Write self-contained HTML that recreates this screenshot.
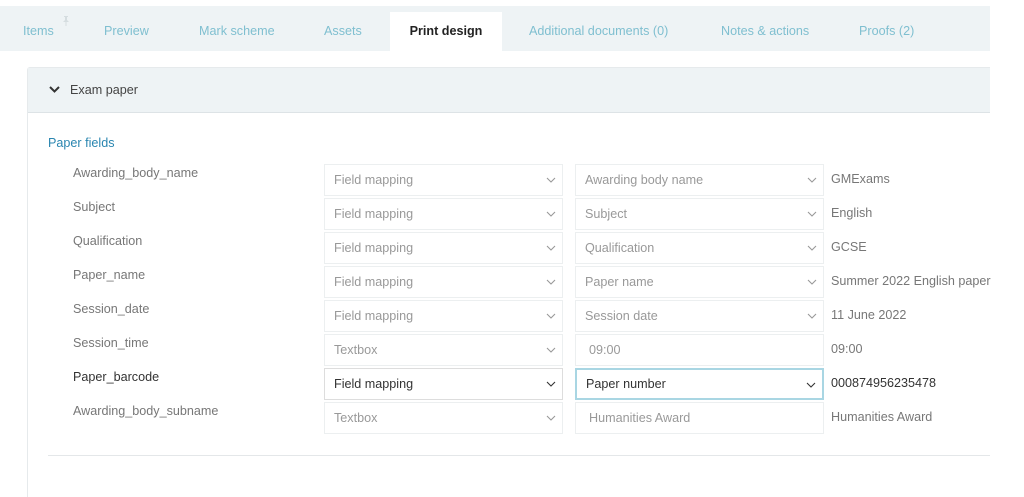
<!DOCTYPE html>
<html><head><style>
*{box-sizing:border-box;margin:0;padding:0}
body{width:1024px;height:479px;background:#fff;font-family:"Liberation Sans",sans-serif;position:relative;overflow:hidden;color:#555}
.tabs{position:absolute;left:0;top:6px;width:990px;height:45px;background:#eef3f5}
.tab{position:absolute;top:18px;font-size:12.6px;color:#7fbfd0}
.active{position:absolute;left:390px;top:6px;width:112px;height:39px;background:#fff;color:#222;font-weight:bold;font-size:12.6px;text-align:center;padding-top:12px}
.panel{position:absolute;left:27px;top:67px;width:963px;height:430px;border:1px solid #e6eaec;border-right:none;border-bottom:none;border-radius:3px 0 0 0}
.ph{height:45px;background:#eef3f5;border-bottom:1px solid #dde3e6;font-size:12.6px;color:#444;padding:15px 0 0 42px;position:relative}
.pf{position:absolute;left:48px;top:136px;font-size:12.6px;color:#2a86b0}
.lbl{position:absolute;left:73px;font-size:12.6px;color:#777}
.sel{position:absolute;height:32px;border:1px solid #eceff0;font-size:12.6px;color:#999;padding:8px 0 0 9px}
.sel svg{position:absolute;right:6px;top:12px}
.val{position:absolute;left:831px;font-size:12.6px;color:#777}
.dark{color:#333}
</style></head><body>
<div class="tabs">
<div class="tab" style="left:23px">Items</div>
<svg style="position:absolute;left:62px;top:10px" width="8" height="10" viewBox="0 0 8 10"><path d="M2 0h4v1H5v3l2 2H1l2-2V1H2z M3.5 6h1v4h-1z" fill="#d5dde0"/></svg>
<div class="tab" style="left:104px">Preview</div>
<div class="tab" style="left:199px">Mark scheme</div>
<div class="tab" style="left:324px">Assets</div>
<div class="active">Print design</div>
<div class="tab" style="left:529px">Additional documents (0)</div>
<div class="tab" style="left:721px">Notes &amp; actions</div>
<div class="tab" style="left:859px">Proofs (2)</div>
</div>
<div class="panel"><div class="ph"><svg style="position:absolute;left:21px;top:18px" width="11" height="8" viewBox="0 0 11 8"><path d="M1 1l4.5 4.5L10 1" stroke="#333" stroke-width="2" fill="none"/></svg>Exam paper</div></div>
<div class="pf">Paper fields</div>
<div style="position:absolute;left:48px;top:455px;width:942px;height:1px;background:#e4e7e9"></div>
<div id="rows"></div>
<script>
var R=[["Awarding_body_name","Field mapping","Awarding body name","GMExams",1],["Subject","Field mapping","Subject","English",1],["Qualification","Field mapping","Qualification","GCSE",1],["Paper_name","Field mapping","Paper name","Summer 2022 English paper",1],["Session_date","Field mapping","Session date","11 June 2022",1],["Session_time","Textbox","09:00","09:00",0],["Paper_barcode","Field mapping","Paper number","000874956235478",1,1],["Awarding_body_subname","Textbox","Humanities Award","Humanities Award",0]];
var h="",ch='<svg width="10" height="6" viewBox="0 0 10 6"><path d="M1 1l4 4 4-4" stroke="#999" stroke-width="1.1" fill="none"/></svg>',chd=ch.replace("#999","#333");
R.forEach(function(r,i){var y=164+i*34;var d=r[5];
h+='<div class="lbl'+(d?' dark':'')+'" style="top:'+(y+2)+'px">'+r[0]+'</div>';
h+='<div class="sel'+(d?' dark':'')+'" style="left:324px;top:'+y+'px;width:239px'+(d?';border-color:#ddd':'')+'">'+r[1]+(d?chd:ch)+'</div>';
h+='<div class="sel'+(d?' dark':'')+'" style="left:575px;top:'+y+'px;width:249px;'+(r[4]?'':'padding-left:13px;')+(d?'border:2px solid #a9d6e3;padding-top:7px;':'')+'">'+r[2]+(r[4]?(d?chd:ch):'')+'</div>';
h+='<div class="val'+(d?' dark':'')+'" style="top:'+(y+8)+'px">'+r[3]+'</div>';});
document.getElementById("rows").innerHTML=h;
</script>
</body></html>
